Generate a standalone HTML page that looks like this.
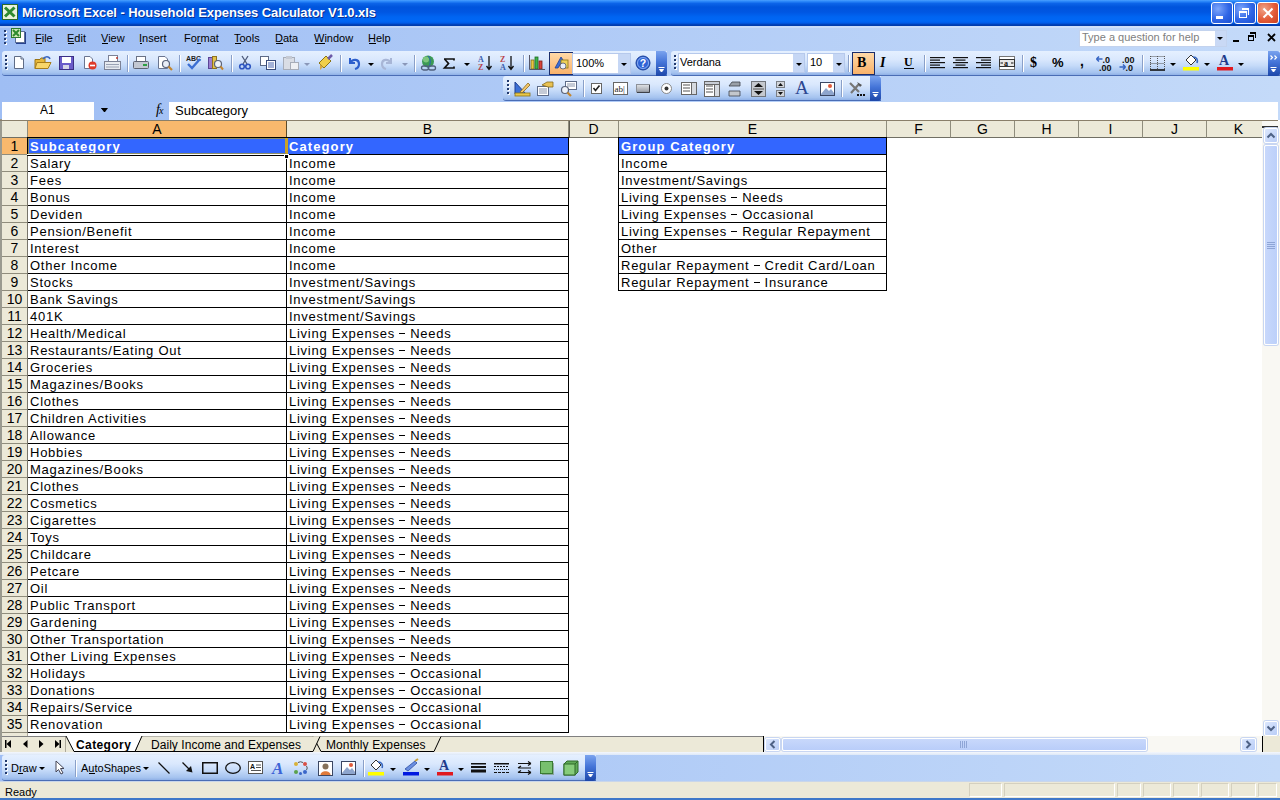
<!DOCTYPE html><html><head><meta charset="utf-8"><style>
*{margin:0;padding:0;box-sizing:border-box}
html,body{width:1280px;height:800px;overflow:hidden;background:#fff;position:relative;font-family:"Liberation Sans",sans-serif}
.a{position:absolute}
.t{position:absolute;white-space:nowrap;line-height:normal}
svg{position:absolute;overflow:visible}
.tb{position:absolute;border-radius:3px 0 0 3px;background:linear-gradient(#e5f0ff 0%,#dae8fd 35%,#c6dbf9 60%,#a5c3ef 90%,#8fb0e6 100%);border-bottom:1px solid #4a6db5}
.grip{position:absolute;width:3px;}
.grip i{position:absolute;left:0;width:2px;height:2px;background:#233a6e;box-shadow:1px 1px 0 #fff}
.chev{position:absolute;background:linear-gradient(#7aa3ee,#4474d8 45%,#1d47a9);border-radius:0 3px 3px 0}
.menu{font-size:11px;color:#000;top:32px}
.sep{position:absolute;width:1px;background:#8aa0c9;box-shadow:1px 0 0 #fff}
.hdr{position:absolute;top:120px;height:18px;background:#ece9d8;background-image:linear-gradient(rgba(255,255,255,0.35),rgba(255,255,255,0) 40%);border-right:1px solid #8f8c7c;border-bottom:1px solid #716f64;font-size:14px;color:#000;text-align:center;line-height:16px;padding-top:1px}
.rh{position:absolute;left:2px;width:26px;height:17px;background:#ece9d8;border-right:1px solid #77746a;border-bottom:1px solid #8f8c7c;font-size:14px;text-align:center;line-height:16px;padding-top:0px;color:#000}
.c{position:absolute;height:18px;border:1px solid #000;font-size:13px;letter-spacing:0.75px;line-height:16px;padding-top:1px;padding-left:2px;color:#000;white-space:nowrap;overflow:hidden;background:#fff}
.hc{background:#3366ff;color:#fff;font-weight:bold;letter-spacing:1.1px}
.d{display:inline-block;width:6px;height:1px;background:#000;vertical-align:4px;margin-left:0.2px;margin-right:0.3px}
.dd{position:absolute;width:0;height:0;border-left:3px solid transparent;border-right:3px solid transparent;border-top:3px solid #000}
</style></head><body>
<div class="a" style="left:0;top:0;width:1280px;height:26px;background:linear-gradient(#4aa0ff 0px,#2a86f8 1.5px,#0c64e8 3.5px,#0054dc 7px,#0056e2 12px,#0065f2 17px,#0067f5 21px,#005ce8 23px,#0042bb 24.5px,#0039a6 26px)"></div>
<div class="a" style="left:2px;top:4px;width:16px;height:16px;background:#e9f2db;border:1px solid #2b6a2b"></div>
<svg style="left:4px;top:6px" width="12" height="12" viewBox="0 0 12 12"><path d="M1 1.5L10.5 10.5M10.5 1.5L1 10.5" stroke="#2f8a2f" stroke-width="3"/></svg>
<div class="t" style="left:22px;top:5px;font-size:13px;font-weight:bold;color:#fff;letter-spacing:-0.08px;text-shadow:1px 1px 0 #0b2f91">Microsoft Excel - Household Expenses Calculator V1.0.xls</div>
<div class="a" style="left:1211px;top:2px;width:22px;height:22px;border:1px solid #fff;border-radius:3px;background:radial-gradient(circle at 30% 30%,#7da6fb,#2f66e6 55%,#1a4fd2)"></div>
<div class="a" style="left:1234px;top:2px;width:22px;height:22px;border:1px solid #fff;border-radius:3px;background:radial-gradient(circle at 30% 30%,#7da6fb,#2f66e6 55%,#1a4fd2)"></div>
<div class="a" style="left:1257px;top:2px;width:22px;height:22px;border:1px solid #fff;border-radius:3px;background:radial-gradient(circle at 30% 30%,#f0a488,#e35b38 55%,#c8401f)"></div>
<div class="a" style="left:1216px;top:16px;width:7px;height:3px;background:#fff"></div>
<div class="a" style="left:1239px;top:11px;width:8px;height:7px;border:1px solid #fff;border-top-width:2px"></div><div class="a" style="left:1242px;top:8px;width:7px;height:7px;border-top:2px solid #fff;border-right:1px solid #fff"></div>
<svg style="left:1262px;top:7px" width="12" height="12" viewBox="0 0 12 12"><path d="M1.5 1.5L10.5 10.5M10.5 1.5L1.5 10.5" stroke="#fff" stroke-width="2"/></svg>
<div class="a" style="left:0;top:26px;width:1280px;height:94px;background:linear-gradient(to right,#9fbef4,#c4daf9)"></div>
<div class="a" style="left:0;top:26px;width:1280px;height:2px;background:rgba(255,255,255,0.25)"></div>
<div class="grip" style="left:4px;top:30px"><i style="top:0px"></i><i style="top:4px"></i><i style="top:8px"></i><i style="top:12px"></i></div>
<div class="a" style="left:15px;top:31px;width:10px;height:12px;background:#fff;border:1px solid #5c6f96;box-shadow:1px 1px 0 #27418f"></div>
<div class="a" style="left:11px;top:28px;width:10px;height:10px;background:#cfe8b5;border:1px solid #2f7a2f"></div>
<svg style="left:12px;top:29px" width="8" height="8" viewBox="0 0 8 8"><path d="M1 1L7 7M7 1L1 7" stroke="#2d8a2d" stroke-width="2"/></svg>
<div class="t menu" style="left:35px">File</div>
<div class="t menu" style="left:67px">Edit</div>
<div class="t menu" style="left:101px">View</div>
<div class="t menu" style="left:139px">Insert</div>
<div class="t menu" style="left:184px">Format</div>
<div class="t menu" style="left:234px">Tools</div>
<div class="t menu" style="left:275px">Data</div>
<div class="t menu" style="left:314px">Window</div>
<div class="t menu" style="left:368px">Help</div>
<div class="a" style="left:36px;top:43px;width:6px;height:1px;background:#000"></div>
<div class="a" style="left:68px;top:43px;width:6px;height:1px;background:#000"></div>
<div class="a" style="left:102px;top:43px;width:6px;height:1px;background:#000"></div>
<div class="a" style="left:140px;top:43px;width:2px;height:1px;background:#000"></div>
<div class="a" style="left:197px;top:43px;width:4px;height:1px;background:#000"></div>
<div class="a" style="left:235px;top:43px;width:6px;height:1px;background:#000"></div>
<div class="a" style="left:276px;top:43px;width:7px;height:1px;background:#000"></div>
<div class="a" style="left:315px;top:43px;width:10px;height:1px;background:#000"></div>
<div class="a" style="left:369px;top:43px;width:7px;height:1px;background:#000"></div>
<div class="a" style="left:1079px;top:30px;width:148px;height:17px;background:#fff;border:1px solid #c3d3ee"></div>
<div class="t" style="left:1082px;top:31px;font-size:11px;color:#808080">Type a question for help</div>
<div class="a" style="left:1215px;top:31px;width:11px;height:15px;background:#c9d9f5"></div>
<div class="dd" style="left:1217px;top:37px;border-top-color:#000"></div>
<div class="a" style="left:1233px;top:40px;width:6px;height:2px;background:#000"></div>
<div class="a" style="left:1248px;top:35px;width:6px;height:6px;border:1px solid #000;border-top-width:2px"></div><div class="a" style="left:1250px;top:32px;width:6px;height:6px;border-top:2px solid #000;border-right:1px solid #000"></div>
<svg style="left:1267px;top:33px" width="9" height="9" viewBox="0 0 9 9"><path d="M1 1L8 8M8 1L1 8" stroke="#000" stroke-width="1.8"/></svg>
<div class="tb" style="left:2px;top:51px;width:665px;height:25px"></div>
<div class="chev" style="left:656px;top:51px;width:11px;height:25px"></div>
<svg style="left:658px;top:67px" width="7" height="7" viewBox="0 0 7 7"><path d="M0.5 0.5H6.5M1.5 2.5L3.5 5L5.5 2.5Z" stroke="#fff" stroke-width="1" fill="#fff"/></svg>
<div class="grip" style="left:5px;top:55px"><i style="top:0px"></i><i style="top:4px"></i><i style="top:8px"></i><i style="top:12px"></i></div>
<svg style="left:13px;top:55px" width="12" height="15" viewBox="0 0 12 15"><path d="M1.5 1.5H8L10.5 4V13.5H1.5Z" fill="#fff" stroke="#5f6c86"/><path d="M8 1.5V4H10.5" fill="#d5dff0" stroke="#5f6c86"/></svg>
<svg style="left:34px;top:56px" width="18" height="14" viewBox="0 0 18 14"><path d="M1 3.5H6L7 2H11V12.5H1Z" fill="#e8b93a" stroke="#9a7417"/><path d="M3 6.5H17L14 12.5H1Z" fill="#f8d66a" stroke="#a77d1a"/><path d="M9 3C11 0 15 0 16 3" stroke="#3a67c2" stroke-width="1.5" fill="none"/></svg>
<svg style="left:59px;top:56px" width="15" height="14" viewBox="0 0 15 14"><rect x="0.5" y="0.5" width="14" height="13" fill="#6a5cc9" stroke="#3b2f85"/><rect x="3" y="1" width="9" height="6" fill="#fff"/><rect x="4" y="9" width="6" height="4" fill="#d6d6e8"/></svg>
<svg style="left:83px;top:55px" width="14" height="15" viewBox="0 0 14 15"><path d="M1.5 1.5H7L9.5 4V13.5H1.5Z" fill="#fff" stroke="#6a7590"/><circle cx="9.5" cy="10.5" r="4" fill="#de3a2a"/><rect x="7" y="9.7" width="5" height="1.6" fill="#fff"/></svg>
<svg style="left:104px;top:55px" width="17" height="15" viewBox="0 0 17 15"><rect x="4.5" y="0.5" width="9" height="6" fill="#fff" stroke="#7c8296"/><rect x="0.5" y="6.5" width="16" height="8" fill="#e7ebf1" stroke="#7c8296"/><line x1="2" y1="9.5" x2="15" y2="9.5" stroke="#9aa2b4"/><line x1="2" y1="12" x2="15" y2="12" stroke="#9aa2b4"/><circle cx="13" cy="3" r="1" fill="#c0392b"/></svg>
<div class="sep" style="left:127px;top:55px;height:17px"></div>
<svg style="left:133px;top:56px" width="16" height="14" viewBox="0 0 16 14"><rect x="3.5" y="0.5" width="9" height="5" fill="#fff" stroke="#6a7285"/><rect x="0.5" y="5.5" width="15" height="7" rx="1" fill="#c3c8d2" stroke="#5d6373"/><rect x="10" y="8" width="4" height="2" fill="#2ea043"/></svg>
<svg style="left:157px;top:55px" width="16" height="16" viewBox="0 0 16 16"><path d="M1.5 1.5H8L10.5 4V13.5H1.5Z" fill="#fff" stroke="#6a7590"/><circle cx="9" cy="9" r="3.5" fill="#e9eef7" stroke="#59627a" stroke-width="1.2"/><path d="M11.5 11.5L15 15" stroke="#c4862e" stroke-width="2.2"/></svg>
<div class="sep" style="left:179px;top:55px;height:17px"></div>
<svg style="left:185px;top:55px" width="17" height="15" viewBox="0 0 17 15"><text x="1" y="6" font-family="Liberation Sans" font-size="7" font-weight="bold" fill="#1d1d1d">ABC</text><path d="M3 9L7 13L15 4" stroke="#3c6fd3" stroke-width="2.4" fill="none"/></svg>
<svg style="left:208px;top:55px" width="16" height="16" viewBox="0 0 16 16"><rect x="0.5" y="2.5" width="4" height="11" fill="#9b7fd0" stroke="#5a4596"/><rect x="4.5" y="1.5" width="4" height="12" fill="#e3c24d" stroke="#8f7420"/><circle cx="10" cy="9" r="3.5" fill="#eef3fa" stroke="#5b6378" stroke-width="1.2"/><path d="M12.5 11.5L15 14.5" stroke="#c4862e" stroke-width="2"/></svg>
<div class="sep" style="left:231px;top:55px;height:17px"></div>
<svg style="left:239px;top:55px" width="12" height="15" viewBox="0 0 12 15"><path d="M3 1L8 9M9 1L4 9" stroke="#4d5a7a" stroke-width="1.3"/><circle cx="3" cy="11.5" r="2.3" fill="none" stroke="#2d55c0" stroke-width="1.6"/><circle cx="9" cy="11.5" r="2.3" fill="none" stroke="#2d55c0" stroke-width="1.6"/></svg>
<svg style="left:260px;top:56px" width="16" height="14" viewBox="0 0 16 14"><rect x="0.5" y="0.5" width="8" height="9" fill="#fff" stroke="#5d6a86"/><rect x="6.5" y="4.5" width="9" height="9" fill="#fff" stroke="#3a4c7a"/><path d="M8 7H14M8 9H14M8 11H14" stroke="#4a66b0"/></svg>
<svg style="left:283px;top:56px" width="17" height="14" viewBox="0 0 17 14"><rect x="0.5" y="1.5" width="11" height="12" fill="#d9dde5" stroke="#a7adb9"/><rect x="3" y="0" width="6" height="3" fill="#c5cad4"/><rect x="7.5" y="6.5" width="8" height="7" fill="#eef0f4" stroke="#a7adb9"/></svg>
<div class="dd" style="left:304px;top:63px;border-top-color:#8a97b8"></div>
<svg style="left:317px;top:55px" width="17" height="16" viewBox="0 0 17 16"><path d="M2 8L9 1L14 6L7 13Z" fill="#f0cf4a" stroke="#8b7414"/><path d="M11 4L15 0" stroke="#6c5aa8" stroke-width="2.5"/><path d="M3 9L6 12L3 15Z" fill="#d8a940"/></svg>
<div class="sep" style="left:340px;top:55px;height:17px"></div>
<svg style="left:347px;top:56px" width="14" height="14" viewBox="0 0 14 14"><path d="M3 2V7H8" fill="none" stroke="#2d5fcc" stroke-width="2"/><path d="M3.5 6.5C6 2.5 12 3 12 8C12 11 10 12.5 8 13" fill="none" stroke="#2d5fcc" stroke-width="2.2"/></svg>
<div class="dd" style="left:368px;top:63px;border-top-color:#000"></div>
<svg style="left:380px;top:56px" width="14" height="14" viewBox="0 0 14 14"><path d="M11 2V7H6" fill="none" stroke="#a8b6d6" stroke-width="2"/><path d="M10.5 6.5C8 2.5 2 3 2 8C2 11 4 12.5 6 13" fill="none" stroke="#a8b6d6" stroke-width="2.2"/></svg>
<div class="dd" style="left:402px;top:63px;border-top-color:#8a97b8"></div>
<div class="sep" style="left:414px;top:55px;height:17px"></div>
<svg style="left:420px;top:55px" width="17" height="16" viewBox="0 0 17 16"><circle cx="8" cy="6.5" r="6" fill="#3c9a55"/><circle cx="6" cy="4.5" r="3" fill="#8fd18a" opacity="0.8"/><path d="M8 1C11 3 11 10 8 12.5" stroke="#2a63b8" fill="none"/><rect x="1.5" y="11" width="7" height="4" rx="2" fill="none" stroke="#50607e" stroke-width="1.3"/><rect x="8.5" y="11" width="7" height="4" rx="2" fill="none" stroke="#50607e" stroke-width="1.3"/></svg>
<svg style="left:443px;top:58px" width="12" height="11" viewBox="0 0 12 11"><path d="M1 1H11V2.5M1.5 1L5.5 5.5L1.5 10H11V8.5" fill="none" stroke="#111" stroke-width="1.7"/></svg>
<div class="dd" style="left:464px;top:63px;border-top-color:#000"></div>
<svg style="left:478px;top:55px" width="15" height="16" viewBox="0 0 15 16"><text x="0" y="7" font-family="Liberation Serif" font-size="8" font-weight="bold" fill="#3b5cad">A</text><text x="0" y="15" font-family="Liberation Serif" font-size="8" font-weight="bold" fill="#b8434a">Z</text><path d="M11 1V14M8.5 11L11 14.5L13.5 11" stroke="#111" stroke-width="1.3" fill="none"/></svg>
<svg style="left:500px;top:55px" width="15" height="16" viewBox="0 0 15 16"><text x="0" y="7" font-family="Liberation Serif" font-size="8" font-weight="bold" fill="#b8434a">Z</text><text x="0" y="15" font-family="Liberation Serif" font-size="8" font-weight="bold" fill="#3b5cad">A</text><path d="M11 1V14M8.5 11L11 14.5L13.5 11" stroke="#111" stroke-width="1.3" fill="none"/></svg>
<div class="sep" style="left:523px;top:55px;height:17px"></div>
<svg style="left:529px;top:55px" width="17" height="16" viewBox="0 0 17 16"><rect x="2" y="5" width="3" height="9" fill="#e9c640" stroke="#7d6b1d" stroke-width="0.8"/><rect x="6" y="2" width="3" height="12" fill="#3db34a" stroke="#1e6b25" stroke-width="0.8"/><rect x="10" y="6" width="3" height="8" fill="#d7453b" stroke="#7a1f18" stroke-width="0.8"/><path d="M0.5 0V14.5H16" stroke="#556" fill="none"/></svg>
<div class="a" style="left:549px;top:52px;width:24px;height:23px;background:linear-gradient(#ffd9a8,#f9b26a);border:1px solid #1b2d6b"></div>
<svg style="left:553px;top:55px" width="16" height="16" viewBox="0 0 16 16"><path d="M2 13L8 2L10 5L5 13Z" fill="#3b6fd6" stroke="#223f94" stroke-width="0.8"/><rect x="8" y="5" width="7" height="8" fill="#f0d25a" stroke="#8a7215" stroke-width="0.8"/><circle cx="10" cy="11" r="3" fill="#e8eefb" stroke="#556" stroke-width="0.8"/></svg>
<div class="a" style="left:572px;top:53px;width:59px;height:21px;background:#fff;border:1px solid #b6c9ec"></div>
<div class="t" style="left:576px;top:57px;font-size:11px">100%</div>
<div class="a" style="left:618px;top:54px;width:12px;height:19px;background:#c6d7f5"></div>
<div class="dd" style="left:621px;top:63px;border-top-color:#000"></div>
<svg style="left:635px;top:55px" width="16" height="16" viewBox="0 0 16 16"><circle cx="8" cy="8" r="7" fill="#2f63d6" stroke="#1b3f98"/><circle cx="8" cy="8" r="5.5" fill="none" stroke="#9ec0f7" stroke-width="0.8"/><text x="4.7" y="12" font-family="Liberation Sans" font-size="10.5" font-weight="bold" fill="#fff">?</text></svg>
<div class="tb" style="left:671px;top:51px;width:609px;height:25px"></div>
<div class="chev" style="left:1268px;top:51px;width:12px;height:25px"></div>
<svg style="left:1270px;top:67px" width="7" height="7" viewBox="0 0 7 7"><path d="M0.5 0.5H6.5M1.5 2.5L3.5 5L5.5 2.5Z" stroke="#fff" stroke-width="1" fill="#fff"/></svg>
<svg style="left:1270px;top:55px" width="8" height="5" viewBox="0 0 8 5"><path d="M0.5 0.5L2.5 2.5L0.5 4.5M4.5 0.5L6.5 2.5L4.5 4.5" stroke="#fff" stroke-width="1.2" fill="none"/></svg>
<div class="grip" style="left:674px;top:55px"><i style="top:0px"></i><i style="top:4px"></i><i style="top:8px"></i><i style="top:12px"></i></div>
<div class="a" style="left:678px;top:53px;width:127px;height:20px;background:#fff;border:1px solid #b6c9ec"></div>
<div class="t" style="left:680px;top:56px;font-size:11px">Verdana</div>
<div class="a" style="left:793px;top:54px;width:11px;height:18px;background:#c6d7f5"></div>
<div class="dd" style="left:796px;top:63px;border-top-color:#000"></div>
<div class="a" style="left:807px;top:53px;width:38px;height:20px;background:#fff;border:1px solid #b6c9ec"></div>
<div class="t" style="left:810px;top:56px;font-size:11px">10</div>
<div class="a" style="left:833px;top:54px;width:11px;height:18px;background:#c6d7f5"></div>
<div class="dd" style="left:836px;top:63px;border-top-color:#000"></div>
<div class="sep" style="left:848px;top:55px;height:17px"></div>
<div class="a" style="left:852px;top:52px;width:23px;height:23px;background:linear-gradient(#ffd9a8,#f9b26a);border:1px solid #1b2d6b"></div>
<div class="t" style="left:857px;top:55px;font-size:14px;font-weight:bold;font-family:'Liberation Serif',serif">B</div>
<div class="t" style="left:880px;top:55px;font-size:14px;font-weight:bold;font-style:italic;font-family:'Liberation Serif',serif">I</div>
<div class="t" style="left:904px;top:55px;font-size:12px;font-weight:bold;font-family:'Liberation Serif',serif">U</div>
<div class="a" style="left:904px;top:68px;width:10px;height:1px;background:#000"></div>
<div class="sep" style="left:924px;top:55px;height:17px"></div>
<svg style="left:930px;top:57px" width="15" height="13" viewBox="0 0 15 13"><rect x="0" y="0.0" width="15" height="1.2" fill="#111"/><rect x="0" y="2.5" width="10" height="1.2" fill="#111"/><rect x="0" y="5.0" width="15" height="1.2" fill="#111"/><rect x="0" y="7.5" width="10" height="1.2" fill="#111"/><rect x="0" y="10.0" width="15" height="1.2" fill="#111"/></svg>
<svg style="left:953px;top:57px" width="15" height="13" viewBox="0 0 15 13"><rect x="0.0" y="0.0" width="15" height="1.2" fill="#111"/><rect x="2.5" y="2.5" width="10" height="1.2" fill="#111"/><rect x="0.0" y="5.0" width="15" height="1.2" fill="#111"/><rect x="2.5" y="7.5" width="10" height="1.2" fill="#111"/><rect x="0.0" y="10.0" width="15" height="1.2" fill="#111"/></svg>
<svg style="left:976px;top:57px" width="15" height="13" viewBox="0 0 15 13"><rect x="0" y="0.0" width="15" height="1.2" fill="#111"/><rect x="5" y="2.5" width="10" height="1.2" fill="#111"/><rect x="0" y="5.0" width="15" height="1.2" fill="#111"/><rect x="5" y="7.5" width="10" height="1.2" fill="#111"/><rect x="0" y="10.0" width="15" height="1.2" fill="#111"/></svg>
<svg style="left:999px;top:56px" width="16" height="14" viewBox="0 0 16 14"><rect x="0.5" y="0.5" width="15" height="13" fill="#fff" stroke="#777"/><rect x="0.5" y="3.5" width="15" height="7" fill="#e8e8e8" stroke="#333"/><text x="5" y="9.5" font-family="Liberation Serif" font-size="8" font-weight="bold" fill="#111">a</text><path d="M1.5 7H4M12 7H14.5" stroke="#111"/></svg>
<div class="sep" style="left:1022px;top:55px;height:17px"></div>
<div class="t" style="left:1030px;top:55px;font-size:14px;font-weight:bold;font-family:'Liberation Serif',serif">$</div>
<div class="t" style="left:1052px;top:55px;font-size:13px;font-weight:bold">%</div>
<div class="t" style="left:1080px;top:53px;font-size:14px;font-weight:bold">,</div>
<svg style="left:1096px;top:55px" width="17" height="16" viewBox="0 0 17 16"><path d="M0.5 4H6.5M0.5 4L3 1.5M0.5 4L3 6.5" stroke="#3766c4" stroke-width="1.6" fill="none"/><text x="6.5" y="7.5" font-family="Liberation Sans" font-size="9" font-weight="bold" fill="#111">.0</text><text x="3" y="15.5" font-family="Liberation Sans" font-size="9" font-weight="bold" fill="#111">.00</text></svg>
<svg style="left:1119px;top:55px" width="17" height="16" viewBox="0 0 17 16"><text x="3" y="7.5" font-family="Liberation Sans" font-size="9" font-weight="bold" fill="#111">.00</text><path d="M0.5 12H6.5M6.5 12L4 9.5M6.5 12L4 14.5" stroke="#3766c4" stroke-width="1.6" fill="none"/><text x="6.5" y="15.5" font-family="Liberation Sans" font-size="9" font-weight="bold" fill="#111">.0</text></svg>
<div class="sep" style="left:1142px;top:55px;height:17px"></div>
<svg style="left:1150px;top:56px" width="15" height="15" viewBox="0 0 15 15"><path d="M0.5 0.5H14.5M0.5 7.5H14.5M0.5 0V14M7.5 0V14M14.5 0V14" stroke="#555" stroke-dasharray="1 1" fill="none"/><path d="M0 14H15" stroke="#111" stroke-width="1.6"/></svg>
<div class="dd" style="left:1170px;top:63px;border-top-color:#000"></div>
<svg style="left:1183px;top:54px" width="17" height="17" viewBox="0 0 17 17"><path d="M3 6L8 1L13 6L8 11Z" fill="#fff" stroke="#333"/><path d="M10 3C14 3 15 6 14 9" stroke="#3566c0" stroke-width="1.6" fill="none"/><rect x="0" y="13" width="16" height="3.5" fill="#ffff00"/></svg>
<div class="dd" style="left:1204px;top:63px;border-top-color:#000"></div>
<svg style="left:1217px;top:54px" width="17" height="17" viewBox="0 0 17 17"><text x="2" y="11" font-family="Liberation Serif" font-size="14" font-weight="bold" fill="#1f3b8c">A</text><rect x="0" y="13" width="16" height="3.5" fill="#e0191f"/></svg>
<div class="dd" style="left:1238px;top:63px;border-top-color:#000"></div>
<div class="tb" style="left:503px;top:76px;width:378px;height:25px"></div>
<div class="chev" style="left:870px;top:76px;width:11px;height:25px"></div>
<svg style="left:872px;top:92px" width="7" height="7" viewBox="0 0 7 7"><path d="M0.5 0.5H6.5M1.5 2.5L3.5 5L5.5 2.5Z" stroke="#fff" stroke-width="1" fill="#fff"/></svg>
<div class="grip" style="left:507px;top:80px"><i style="top:0px"></i><i style="top:4px"></i><i style="top:8px"></i><i style="top:12px"></i></div>
<svg style="left:514px;top:81px" width="17" height="16" viewBox="0 0 17 16"><path d="M1 1V13H12Z" fill="#3b6fd6" stroke="#1d3f93"/><path d="M6 11L14 2L16 4L8 12Z" fill="#f2c56b" stroke="#8a6a1a" stroke-width="0.8"/><rect x="1" y="12" width="15" height="3" fill="#e9c84a" stroke="#8a7215" stroke-width="0.8"/></svg>
<svg style="left:537px;top:81px" width="17" height="15" viewBox="0 0 17 15"><rect x="0.5" y="5.5" width="11" height="9" fill="#fff" stroke="#5c6b88"/><path d="M2 8H10M2 10H10M2 12H10" stroke="#8a96ad"/><path d="M5 4L10 1H16V6H11Z" fill="#e8c153" stroke="#866a1b" stroke-width="0.8"/></svg>
<svg style="left:560px;top:81px" width="17" height="16" viewBox="0 0 17 16"><rect x="5.5" y="0.5" width="11" height="8" fill="#fff" stroke="#5c6b88"/><path d="M7 3H15M7 5H15" stroke="#8a96ad"/><circle cx="5" cy="9" r="3.5" fill="#eef2fa" stroke="#59627a" stroke-width="1.2"/><path d="M7.5 11.5L11 15" stroke="#c4862e" stroke-width="2.2"/></svg>
<div class="sep" style="left:583px;top:80px;height:17px"></div>
<svg style="left:591px;top:83px" width="11" height="11" viewBox="0 0 11 11"><rect x="0.5" y="0.5" width="10" height="10" fill="#fff" stroke="#666"/><path d="M2.5 5L4.5 7.5L8.5 2.5" stroke="#222" stroke-width="1.6" fill="none"/></svg>
<svg style="left:613px;top:82px" width="15" height="13" viewBox="0 0 15 13"><rect x="0.5" y="0.5" width="14" height="12" fill="#fff" stroke="#666"/><text x="1.5" y="10" font-family="Liberation Serif" font-size="9" fill="#222">ab|</text></svg>
<svg style="left:636px;top:84px" width="14" height="9" viewBox="0 0 14 9"><defs><linearGradient id="cb" x1="0" y1="0" x2="0" y2="1"><stop offset="0" stop-color="#e2e4e8"/><stop offset="1" stop-color="#9a9ea6"/></linearGradient></defs><rect x="0.5" y="0.5" width="13" height="7.5" fill="url(#cb)" stroke="#8d9199"/><path d="M1 8.5H13.5V1" fill="none" stroke="#3d4048"/></svg>
<svg style="left:661px;top:83px" width="11" height="11" viewBox="0 0 11 11"><circle cx="5.5" cy="5.5" r="5" fill="#fff" stroke="#888"/><circle cx="5.5" cy="5.5" r="2" fill="#333"/></svg>
<svg style="left:681px;top:82px" width="16" height="13" viewBox="0 0 16 13"><rect x="0.5" y="0.5" width="15" height="12" fill="#fff" stroke="#666"/><path d="M2 3H9M2 6H9M2 9H9" stroke="#555"/><rect x="10.5" y="0.5" width="5" height="12" fill="#d6dae0" stroke="#666"/></svg>
<svg style="left:704px;top:81px" width="16" height="16" viewBox="0 0 16 16"><rect x="0.5" y="0.5" width="15" height="15" fill="#fff" stroke="#666"/><path d="M2 5H9M2 8H9M2 11H9" stroke="#555"/><rect x="10.5" y="0.5" width="5" height="15" fill="#d6dae0" stroke="#666"/><rect x="0.5" y="0.5" width="15" height="3" fill="#c9ced6" stroke="#666"/></svg>
<svg style="left:729px;top:82px" width="12" height="14" viewBox="0 0 12 14"><path d="M0 4H11V0L3 0Z" fill="#9aa0a8" stroke="#3d434b" stroke-width="0.8"/><path d="M0 9H11V14H0Z" fill="#c3c7cc" stroke="#3d434b" stroke-width="0.8"/></svg>
<svg style="left:751px;top:81px" width="15" height="16" viewBox="0 0 15 16"><rect x="0.5" y="0.5" width="14" height="15" fill="#c5c9cf" stroke="#6f747b"/><path d="M3 6L7.5 2L12 6ZM3 10L7.5 14L12 10Z" fill="#111"/><path d="M2 8H13" stroke="#555"/></svg>
<svg style="left:776px;top:81px" width="9" height="16" viewBox="0 0 9 16"><rect x="0.5" y="0.5" width="8" height="6" fill="#d3d6db" stroke="#7a7f86"/><rect x="0.5" y="9.5" width="8" height="6" fill="#d3d6db" stroke="#7a7f86"/><path d="M2 5L4.5 2L7 5ZM2 11L4.5 14L7 11Z" fill="#111"/></svg>
<div class="t" style="left:795px;top:77px;font-size:19px;font-family:'Liberation Serif',serif;color:#2d4790">A</div>
<svg style="left:820px;top:82px" width="15" height="14" viewBox="0 0 15 14"><rect x="0.5" y="0.5" width="14" height="13" fill="#fff" stroke="#3b4763"/><path d="M1 12L6 6L9 9L11 7L14 11V13H1Z" fill="#8ea5cd"/><circle cx="10" cy="4" r="2" fill="#e05a3a"/></svg>
<div class="sep" style="left:841px;top:80px;height:17px"></div>
<svg style="left:848px;top:81px" width="17" height="16" viewBox="0 0 17 16"><path d="M2 2L11 11M11 3L3 12" stroke="#777" stroke-width="2.2"/><path d="M9 1L14 4L12 6Z" fill="#555"/><rect x="9" y="13" width="2" height="2" fill="#111"/><rect x="12" y="13" width="2" height="2" fill="#111"/><rect x="15" y="13" width="2" height="2" fill="#111"/></svg>
<div class="a" style="left:2px;top:102px;width:92px;height:18px;background:#fff"></div>
<div class="t" style="left:40px;top:103px;font-size:12px">A1</div>
<div class="dd" style="left:101px;top:108px;border-top-color:#000"></div>
<div class="a" style="left:101px;top:108px;width:7px;height:0;border-left:3.5px solid transparent;border-right:3.5px solid transparent;border-top:4px solid #000"></div>
<div class="t" style="left:156px;top:102px;font-size:14px;font-style:italic;font-family:'Liberation Serif',serif;letter-spacing:-1px">f<span style="font-size:10px">x</span></div>
<div class="a" style="left:169px;top:102px;width:1109px;height:18px;background:#fff"></div>
<div class="t" style="left:175px;top:103px;font-size:13px">Subcategory</div>
<div class="a" style="left:0;top:119px;width:2px;height:633px;background:#9a9a90"></div>
<div class="hdr" style="left:1207px;width:64px;background:#ece9d8">K</div>
<div class="hdr" style="left:1143px;width:64px;background:#ece9d8">J</div>
<div class="hdr" style="left:1079px;width:64px;background:#ece9d8">I</div>
<div class="hdr" style="left:1015px;width:64px;background:#ece9d8">H</div>
<div class="hdr" style="left:951px;width:64px;background:#ece9d8">G</div>
<div class="hdr" style="left:887px;width:64px;background:#ece9d8">F</div>
<div class="hdr" style="left:619px;width:268px;background:#ece9d8">E</div>
<div class="hdr" style="left:569px;width:50px;background:#ece9d8">D</div>
<div class="hdr" style="left:287px;width:282px;background:#ece9d8">B</div>
<div class="hdr" style="left:28px;width:259px;background:#f9b96d;border-right-color:#5c4a2a">A</div>
<div class="hdr" style="left:2px;width:26px;background:#ece9d8"></div>
<div class="a" style="left:569px;top:120px;width:1px;height:18px;background:#5e5c52"></div>
<div class="a" style="left:0;top:120px;width:1278px;height:1px;background:#8a7f6a"></div>
<div class="rh" style="top:138px;background:#f9b96d">1</div>
<div class="rh" style="top:155px;background:#ece9d8">2</div>
<div class="rh" style="top:172px;background:#ece9d8">3</div>
<div class="rh" style="top:189px;background:#ece9d8">4</div>
<div class="rh" style="top:206px;background:#ece9d8">5</div>
<div class="rh" style="top:223px;background:#ece9d8">6</div>
<div class="rh" style="top:240px;background:#ece9d8">7</div>
<div class="rh" style="top:257px;background:#ece9d8">8</div>
<div class="rh" style="top:274px;background:#ece9d8">9</div>
<div class="rh" style="top:291px;background:#ece9d8">10</div>
<div class="rh" style="top:308px;background:#ece9d8">11</div>
<div class="rh" style="top:325px;background:#ece9d8">12</div>
<div class="rh" style="top:342px;background:#ece9d8">13</div>
<div class="rh" style="top:359px;background:#ece9d8">14</div>
<div class="rh" style="top:376px;background:#ece9d8">15</div>
<div class="rh" style="top:393px;background:#ece9d8">16</div>
<div class="rh" style="top:410px;background:#ece9d8">17</div>
<div class="rh" style="top:427px;background:#ece9d8">18</div>
<div class="rh" style="top:444px;background:#ece9d8">19</div>
<div class="rh" style="top:461px;background:#ece9d8">20</div>
<div class="rh" style="top:478px;background:#ece9d8">21</div>
<div class="rh" style="top:495px;background:#ece9d8">22</div>
<div class="rh" style="top:512px;background:#ece9d8">23</div>
<div class="rh" style="top:529px;background:#ece9d8">24</div>
<div class="rh" style="top:546px;background:#ece9d8">25</div>
<div class="rh" style="top:563px;background:#ece9d8">26</div>
<div class="rh" style="top:580px;background:#ece9d8">27</div>
<div class="rh" style="top:597px;background:#ece9d8">28</div>
<div class="rh" style="top:614px;background:#ece9d8">29</div>
<div class="rh" style="top:631px;background:#ece9d8">30</div>
<div class="rh" style="top:648px;background:#ece9d8">31</div>
<div class="rh" style="top:665px;background:#ece9d8">32</div>
<div class="rh" style="top:682px;background:#ece9d8">33</div>
<div class="rh" style="top:699px;background:#ece9d8">34</div>
<div class="rh" style="top:716px;background:#ece9d8">35</div>
<div class="rh" style="top:733px;background:#ece9d8"></div>
<div class="c hc" style="left:27px;top:137px;width:260px">Subcategory</div>
<div class="c hc" style="left:286px;top:137px;width:283px">Category</div>
<div class="c" style="left:27px;top:154px;width:260px">Salary</div>
<div class="c" style="left:286px;top:154px;width:283px">Income</div>
<div class="c" style="left:27px;top:171px;width:260px">Fees</div>
<div class="c" style="left:286px;top:171px;width:283px">Income</div>
<div class="c" style="left:27px;top:188px;width:260px">Bonus</div>
<div class="c" style="left:286px;top:188px;width:283px">Income</div>
<div class="c" style="left:27px;top:205px;width:260px">Deviden</div>
<div class="c" style="left:286px;top:205px;width:283px">Income</div>
<div class="c" style="left:27px;top:222px;width:260px">Pension/Benefit</div>
<div class="c" style="left:286px;top:222px;width:283px">Income</div>
<div class="c" style="left:27px;top:239px;width:260px">Interest</div>
<div class="c" style="left:286px;top:239px;width:283px">Income</div>
<div class="c" style="left:27px;top:256px;width:260px">Other Income</div>
<div class="c" style="left:286px;top:256px;width:283px">Income</div>
<div class="c" style="left:27px;top:273px;width:260px">Stocks</div>
<div class="c" style="left:286px;top:273px;width:283px">Investment/Savings</div>
<div class="c" style="left:27px;top:290px;width:260px">Bank Savings</div>
<div class="c" style="left:286px;top:290px;width:283px">Investment/Savings</div>
<div class="c" style="left:27px;top:307px;width:260px">401K</div>
<div class="c" style="left:286px;top:307px;width:283px">Investment/Savings</div>
<div class="c" style="left:27px;top:324px;width:260px">Health/Medical</div>
<div class="c" style="left:286px;top:324px;width:283px">Living Expenses <i class=d></i> Needs</div>
<div class="c" style="left:27px;top:341px;width:260px">Restaurants/Eating Out</div>
<div class="c" style="left:286px;top:341px;width:283px">Living Expenses <i class=d></i> Needs</div>
<div class="c" style="left:27px;top:358px;width:260px">Groceries</div>
<div class="c" style="left:286px;top:358px;width:283px">Living Expenses <i class=d></i> Needs</div>
<div class="c" style="left:27px;top:375px;width:260px">Magazines/Books</div>
<div class="c" style="left:286px;top:375px;width:283px">Living Expenses <i class=d></i> Needs</div>
<div class="c" style="left:27px;top:392px;width:260px">Clothes</div>
<div class="c" style="left:286px;top:392px;width:283px">Living Expenses <i class=d></i> Needs</div>
<div class="c" style="left:27px;top:409px;width:260px">Children Activities</div>
<div class="c" style="left:286px;top:409px;width:283px">Living Expenses <i class=d></i> Needs</div>
<div class="c" style="left:27px;top:426px;width:260px">Allowance</div>
<div class="c" style="left:286px;top:426px;width:283px">Living Expenses <i class=d></i> Needs</div>
<div class="c" style="left:27px;top:443px;width:260px">Hobbies</div>
<div class="c" style="left:286px;top:443px;width:283px">Living Expenses <i class=d></i> Needs</div>
<div class="c" style="left:27px;top:460px;width:260px">Magazines/Books</div>
<div class="c" style="left:286px;top:460px;width:283px">Living Expenses <i class=d></i> Needs</div>
<div class="c" style="left:27px;top:477px;width:260px">Clothes</div>
<div class="c" style="left:286px;top:477px;width:283px">Living Expenses <i class=d></i> Needs</div>
<div class="c" style="left:27px;top:494px;width:260px">Cosmetics</div>
<div class="c" style="left:286px;top:494px;width:283px">Living Expenses <i class=d></i> Needs</div>
<div class="c" style="left:27px;top:511px;width:260px">Cigarettes</div>
<div class="c" style="left:286px;top:511px;width:283px">Living Expenses <i class=d></i> Needs</div>
<div class="c" style="left:27px;top:528px;width:260px">Toys</div>
<div class="c" style="left:286px;top:528px;width:283px">Living Expenses <i class=d></i> Needs</div>
<div class="c" style="left:27px;top:545px;width:260px">Childcare</div>
<div class="c" style="left:286px;top:545px;width:283px">Living Expenses <i class=d></i> Needs</div>
<div class="c" style="left:27px;top:562px;width:260px">Petcare</div>
<div class="c" style="left:286px;top:562px;width:283px">Living Expenses <i class=d></i> Needs</div>
<div class="c" style="left:27px;top:579px;width:260px">Oil</div>
<div class="c" style="left:286px;top:579px;width:283px">Living Expenses <i class=d></i> Needs</div>
<div class="c" style="left:27px;top:596px;width:260px">Public Transport</div>
<div class="c" style="left:286px;top:596px;width:283px">Living Expenses <i class=d></i> Needs</div>
<div class="c" style="left:27px;top:613px;width:260px">Gardening</div>
<div class="c" style="left:286px;top:613px;width:283px">Living Expenses <i class=d></i> Needs</div>
<div class="c" style="left:27px;top:630px;width:260px">Other Transportation</div>
<div class="c" style="left:286px;top:630px;width:283px">Living Expenses <i class=d></i> Needs</div>
<div class="c" style="left:27px;top:647px;width:260px">Other Living Expenses</div>
<div class="c" style="left:286px;top:647px;width:283px">Living Expenses <i class=d></i> Needs</div>
<div class="c" style="left:27px;top:664px;width:260px">Holidays</div>
<div class="c" style="left:286px;top:664px;width:283px">Living Expenses <i class=d></i> Occasional</div>
<div class="c" style="left:27px;top:681px;width:260px">Donations</div>
<div class="c" style="left:286px;top:681px;width:283px">Living Expenses <i class=d></i> Occasional</div>
<div class="c" style="left:27px;top:698px;width:260px">Repairs/Service</div>
<div class="c" style="left:286px;top:698px;width:283px">Living Expenses <i class=d></i> Occasional</div>
<div class="c" style="left:27px;top:715px;width:260px">Renovation</div>
<div class="c" style="left:286px;top:715px;width:283px">Living Expenses <i class=d></i> Occasional</div>
<div class="c hc" style="left:618px;top:137px;width:269px">Group Category</div>
<div class="c" style="left:618px;top:154px;width:269px">Income</div>
<div class="c" style="left:618px;top:171px;width:269px">Investment/Savings</div>
<div class="c" style="left:618px;top:188px;width:269px">Living Expenses <i class=d></i> Needs</div>
<div class="c" style="left:618px;top:205px;width:269px">Living Expenses <i class=d></i> Occasional</div>
<div class="c" style="left:618px;top:222px;width:269px">Living Expenses <i class=d></i> Regular Repayment</div>
<div class="c" style="left:618px;top:239px;width:269px">Other</div>
<div class="c" style="left:618px;top:256px;width:269px">Regular Repayment <i class=d></i> Credit Card/Loan</div>
<div class="c" style="left:618px;top:273px;width:269px">Regular Repayment <i class=d></i> Insurance</div>
<div class="a" style="left:27px;top:155px;width:1px;height:581px;background:#77746a"></div>
<div class="a" style="left:28px;top:138px;width:1px;height:16px;background:#8c8c64"></div>
<div class="a" style="left:28px;top:138px;width:258px;height:1px;background:#8c8c64"></div>
<div class="a" style="left:285px;top:138px;width:3px;height:16px;background:#c9a227"></div>
<div class="a" style="left:28px;top:153px;width:258px;height:1px;background:#8c8c64"></div>
<div class="a" style="left:27px;top:154px;width:260px;height:1px;background:#fff"></div>
<div class="a" style="left:27px;top:155px;width:257px;height:1px;background:#000"></div>
<div class="a" style="left:284px;top:154px;width:5px;height:5px;background:#000;border:1px solid #fff"></div>
<div class="a" style="left:1262px;top:121px;width:18px;height:615px;background:#f9f8f3"></div>
<div class="a" style="left:1262px;top:126px;width:16px;height:2px;background:#333"></div>
<div class="a" style="left:1264px;top:128px;width:14px;height:15px;background:linear-gradient(135deg,#dce7fd,#b9cdf7);border:1px solid #fff;border-radius:2px;box-shadow:0 0 0 1px #c8d6f2"></div>
<svg style="left:0;top:0" width="1280" height="800"><path d="M1267.5 137.5L1271.0 134.0L1274.5 137.5" stroke="#4d6185" stroke-width="2" fill="none"/></svg>
<div class="a" style="left:1264px;top:145px;width:14px;height:200px;background:linear-gradient(to right,#c8d8fb,#bcd0fa);border:1px solid #fff;border-radius:2px;box-shadow:0 0 0 1px #c8d6f2"></div>
<div class="a" style="left:1267px;top:242px;width:8px;height:7px;background:repeating-linear-gradient(#8ea5d6 0 1px,transparent 1px 2px)"></div>
<div class="a" style="left:1264px;top:721px;width:14px;height:15px;background:linear-gradient(135deg,#dce7fd,#b9cdf7);border:1px solid #fff;border-radius:2px;box-shadow:0 0 0 1px #c8d6f2"></div>
<svg style="left:0;top:0" width="1280" height="800"><path d="M1267.5 726.5L1271.0 730.0L1274.5 726.5" stroke="#4d6185" stroke-width="2" fill="none"/></svg>
<div class="a" style="left:2px;top:733px;width:26px;height:3px;background:#ece9d8;border-right:1px solid #aca899"></div>
<div class="a" style="left:2px;top:736px;width:761px;height:16px;background:#ece9d8;border-top:1px solid #808080"></div>
<svg style="left:5px;top:740px" width="6" height="8" viewBox="0 0 6 8"><rect x="0" y="0" width="1.5" height="8" fill="#000"/><path d="M6 0V8L1.5 4Z" fill="#000"/></svg>
<svg style="left:23px;top:740px" width="5" height="8" viewBox="0 0 5 8"><path d="M4.5 0V8L0 4Z" fill="#000"/></svg>
<svg style="left:39px;top:740px" width="5" height="8" viewBox="0 0 5 8"><path d="M0 0V8L4.5 4Z" fill="#000"/></svg>
<svg style="left:55px;top:740px" width="6" height="8" viewBox="0 0 6 8"><path d="M0 0V8L4.5 4Z" fill="#000"/><rect x="4.5" y="0" width="1.5" height="8" fill="#000"/></svg>
<div class="a" style="left:65px;top:737px;width:1px;height:15px;background:#aca899"></div>
<svg style="left:0px;top:736px" width="763" height="16" viewBox="0 0 763 16"><path d="M313 0.5L321 15.5H434L441 0.5" fill="#ece9d8" stroke="#000"/><path d="M141 0.5L135 15.5H313L320 0.5" fill="#ece9d8" stroke="#000"/><path d="M66 0L74 15.5H135L142 0" fill="#fff" stroke="#000"/></svg>
<div class="t" style="left:76px;top:738px;font-size:12px;font-weight:bold;letter-spacing:0.4px">Category</div>
<div class="t" style="left:151px;top:738px;font-size:12px;letter-spacing:0.05px">Daily Income and Expenses</div>
<div class="t" style="left:326px;top:738px;font-size:12px;letter-spacing:0.1px">Monthly Expenses</div>
<div class="a" style="left:763px;top:736px;width:1px;height:16px;background:#000"></div>
<div class="a" style="left:764px;top:736px;width:498px;height:16px;background:#f9f8f3"></div>
<div class="a" style="left:765px;top:738px;width:15px;height:13px;background:linear-gradient(135deg,#dce7fd,#b9cdf7);border:1px solid #fff;border-radius:2px;box-shadow:0 0 0 1px #c8d6f2"></div>
<svg style="left:0;top:0" width="1280" height="800"><path d="M774.5 741.0L771.0 744.5L774.5 748.0" stroke="#4d6185" stroke-width="2" fill="none"/></svg>
<div class="a" style="left:782px;top:738px;width:365px;height:13px;background:linear-gradient(#c8d8fb,#b9cdf9);border:1px solid #fff;border-radius:2px;box-shadow:0 0 0 1px #c8d6f2"></div>
<div class="a" style="left:960px;top:741px;width:8px;height:7px;background:repeating-linear-gradient(to right,#8ea5d6 0 1px,transparent 1px 2px)"></div>
<div class="a" style="left:1241px;top:738px;width:15px;height:13px;background:linear-gradient(135deg,#dce7fd,#b9cdf7);border:1px solid #fff;border-radius:2px;box-shadow:0 0 0 1px #c8d6f2"></div>
<svg style="left:0;top:0" width="1280" height="800"><path d="M1246.5 741.0L1250.0 744.5L1246.5 748.0" stroke="#4d6185" stroke-width="2" fill="none"/></svg>
<div class="a" style="left:1262px;top:736px;width:1px;height:16px;background:#000"></div>
<div class="a" style="left:1263px;top:736px;width:17px;height:16px;background:#ece9d8"></div>
<div class="a" style="left:0;top:752px;width:1280px;height:30px;background:linear-gradient(to right,#9fbef4,#c4daf9)"></div>
<div class="a" style="left:0;top:752px;width:1280px;height:3px;background:linear-gradient(#f4f7fc,#dde8f8)"></div>
<div class="tb" style="left:2px;top:755px;width:594px;height:26px"></div>
<div class="chev" style="left:585px;top:755px;width:11px;height:26px"></div>
<svg style="left:587px;top:772px" width="7" height="7" viewBox="0 0 7 7"><path d="M0.5 0.5H6.5M1.5 2.5L3.5 5L5.5 2.5Z" stroke="#fff" stroke-width="1" fill="#fff"/></svg>
<div class="grip" style="left:5px;top:760px"><i style="top:0px"></i><i style="top:4px"></i><i style="top:8px"></i><i style="top:12px"></i></div>
<div class="t" style="left:11px;top:762px;font-size:11px">Draw</div>
<div class="a" style="left:18px;top:773px;width:5px;height:1px;background:#000"></div>
<div class="dd" style="left:39px;top:767px;border-top-color:#000"></div>
<svg style="left:55px;top:760px" width="10" height="15" viewBox="0 0 10 15"><path d="M1 1V12L3.5 9.5L6 14L8 13L5.5 8.5H9Z" fill="#fff" stroke="#445"/></svg>
<div class="sep" style="left:75px;top:760px;height:17px"></div>
<div class="t" style="left:81px;top:762px;font-size:11px">AutoShapes</div>
<div class="a" style="left:89px;top:773px;width:6px;height:1px;background:#000"></div>
<div class="dd" style="left:143px;top:767px;border-top-color:#000"></div>
<svg style="left:158px;top:762px" width="12" height="12" viewBox="0 0 12 12"><path d="M0.5 0.5L11.5 11.5" stroke="#111" stroke-width="1.3"/></svg>
<svg style="left:182px;top:762px" width="11" height="12" viewBox="0 0 11 12"><path d="M0.5 0.5L9 9" stroke="#111" stroke-width="1.3"/><path d="M10.5 10.5L4 9L9 4Z" fill="#111"/></svg>
<svg style="left:202px;top:762px" width="16" height="12" viewBox="0 0 16 12"><rect x="0.75" y="0.75" width="14.5" height="10.5" fill="none" stroke="#111" stroke-width="1.5"/></svg>
<svg style="left:225px;top:762px" width="16" height="12" viewBox="0 0 16 12"><ellipse cx="8" cy="6" rx="7.3" ry="5.3" fill="none" stroke="#111" stroke-width="1.3"/></svg>
<svg style="left:248px;top:761px" width="15" height="13" viewBox="0 0 15 13"><rect x="0.5" y="0.5" width="14" height="12" fill="#fff" stroke="#555"/><text x="2" y="8" font-family="Liberation Sans" font-size="7" font-weight="bold" fill="#111">A</text><path d="M8 4H13M8 6.5H13M3 9.5H13" stroke="#555"/></svg>
<svg style="left:271px;top:760px" width="17" height="16" viewBox="0 0 17 16"><text x="1" y="14" font-family="Liberation Serif" font-size="17" font-style="italic" font-weight="bold" fill="#3c63d6">A</text></svg>
<svg style="left:293px;top:761px" width="15" height="14" viewBox="0 0 15 14"><circle cx="3" cy="3" r="2" fill="#d9b238"/><circle cx="12" cy="3" r="2" fill="#d85046"/><circle cx="3" cy="11" r="2" fill="#5aa14c"/><circle cx="12" cy="11" r="2" fill="#3a66c9"/><circle cx="7.5" cy="12.5" r="1.5" fill="#3a66c9"/><path d="M5 1.5Q7.5 0 10 1.5M13.5 5Q15 7 13.5 9" stroke="#555" fill="none"/></svg>
<svg style="left:318px;top:761px" width="15" height="15" viewBox="0 0 15 15"><rect x="0.5" y="0.5" width="14" height="14" fill="#fff" stroke="#3b4763"/><circle cx="7.5" cy="5.5" r="3" fill="#85715b"/><path d="M2.5 14C2.5 9 12.5 9 12.5 14Z" fill="#e07a3a"/></svg>
<svg style="left:341px;top:761px" width="15" height="14" viewBox="0 0 15 14"><rect x="0.5" y="0.5" width="14" height="13" fill="#fff" stroke="#3b4763"/><path d="M1 12L6 6L9 9L11 7L14 11V13H1Z" fill="#8ea5cd"/><circle cx="10" cy="4" r="2" fill="#e05a3a"/></svg>
<div class="sep" style="left:363px;top:760px;height:17px"></div>
<svg style="left:368px;top:759px" width="17" height="17" viewBox="0 0 17 17"><path d="M3 6L8 1L13 6L8 11Z" fill="#fff" stroke="#333"/><path d="M10 3C14 3 15 6 14 9" stroke="#3566c0" stroke-width="1.6" fill="none"/><rect x="0" y="13" width="16" height="3.5" fill="#ffff00"/></svg>
<div class="dd" style="left:390px;top:768px;border-top-color:#000"></div>
<svg style="left:403px;top:759px" width="17" height="17" viewBox="0 0 17 17"><path d="M2 10L12 2L14 4L5 12Z" fill="#6a8fe0" stroke="#2c4da3" stroke-width="0.8"/><path d="M12 2L15 0" stroke="#c9a23a" stroke-width="2"/><rect x="0" y="13" width="16" height="3.5" fill="#0019e0"/></svg>
<div class="dd" style="left:424px;top:768px;border-top-color:#000"></div>
<svg style="left:437px;top:759px" width="17" height="17" viewBox="0 0 17 17"><text x="2" y="11" font-family="Liberation Serif" font-size="14" font-weight="bold" fill="#1f3b8c">A</text><rect x="0" y="13" width="16" height="3.5" fill="#e0191f"/></svg>
<div class="dd" style="left:458px;top:768px;border-top-color:#000"></div>
<svg style="left:471px;top:763px" width="15" height="10" viewBox="0 0 15 10"><rect x="0" y="0" width="15" height="1.5" fill="#111"/><rect x="0" y="3" width="15" height="2" fill="#111"/><rect x="0" y="6.5" width="15" height="3" fill="#111"/></svg>
<svg style="left:494px;top:763px" width="15" height="10" viewBox="0 0 15 10"><path d="M0 0.75H15" stroke="#111" stroke-width="1.5"/><path d="M0 3.5H15" stroke="#111" stroke-dasharray="2 1"/><path d="M0 6.5H15" stroke="#111" stroke-dasharray="1 1"/><path d="M0 9.5H15" stroke="#111" stroke-dasharray="3 1"/></svg>
<svg style="left:517px;top:761px" width="16" height="14" viewBox="0 0 16 14"><path d="M1 2.5H14M14 2.5L11 0.5M14 2.5L11 4.5M1 7H14M1 7L4 5M1 11.5H14M1 11.5L4 9.5M14 11.5L11 13.5M14 11.5L11 9.5" stroke="#111" stroke-width="1.2" fill="none"/></svg>
<svg style="left:540px;top:761px" width="15" height="15" viewBox="0 0 15 15"><rect x="2" y="2" width="12" height="12" fill="#6f8a6a" opacity="0.6"/><rect x="0.5" y="0.5" width="12" height="12" fill="#78c06e" stroke="#3a7a33"/></svg>
<svg style="left:563px;top:760px" width="16" height="16" viewBox="0 0 16 16"><path d="M1 4L4 1H15V12L12 15H1Z" fill="#5fa957" stroke="#2f6b2a"/><rect x="1" y="4" width="11" height="11" fill="#86cc7b" stroke="#2f6b2a"/><path d="M12 4L15 1" stroke="#2f6b2a"/></svg>
<div class="a" style="left:0;top:781px;width:1280px;height:17px;background:#ece9d8"></div><div class="a" style="left:0;top:781px;width:1280px;height:1px;background:#c9d6ea"></div>
<div class="t" style="left:5px;top:786px;font-size:11px">Ready</div>
<div class="a" style="left:969px;top:783px;width:33px;height:14px;border:1px solid #d4d0bf;border-right-color:#fff;border-bottom-color:#fff"></div>
<div class="a" style="left:1004px;top:783px;width:111px;height:14px;border:1px solid #d4d0bf;border-right-color:#fff;border-bottom-color:#fff"></div>
<div class="a" style="left:1117px;top:783px;width:24px;height:14px;border:1px solid #d4d0bf;border-right-color:#fff;border-bottom-color:#fff"></div>
<div class="a" style="left:1143px;top:783px;width:28px;height:14px;border:1px solid #d4d0bf;border-right-color:#fff;border-bottom-color:#fff"></div>
<div class="a" style="left:1173px;top:783px;width:26px;height:14px;border:1px solid #d4d0bf;border-right-color:#fff;border-bottom-color:#fff"></div>
<div class="a" style="left:1201px;top:783px;width:28px;height:14px;border:1px solid #d4d0bf;border-right-color:#fff;border-bottom-color:#fff"></div>
<div class="a" style="left:1231px;top:783px;width:25px;height:14px;border:1px solid #d4d0bf;border-right-color:#fff;border-bottom-color:#fff"></div>
<div class="a" style="left:1258px;top:783px;width:19px;height:14px;border:1px solid #d4d0bf;border-right-color:#fff;border-bottom-color:#fff"></div>
<div class="a" style="left:0;top:798px;width:1280px;height:2px;background:#3f78c9"></div>
</body></html>
